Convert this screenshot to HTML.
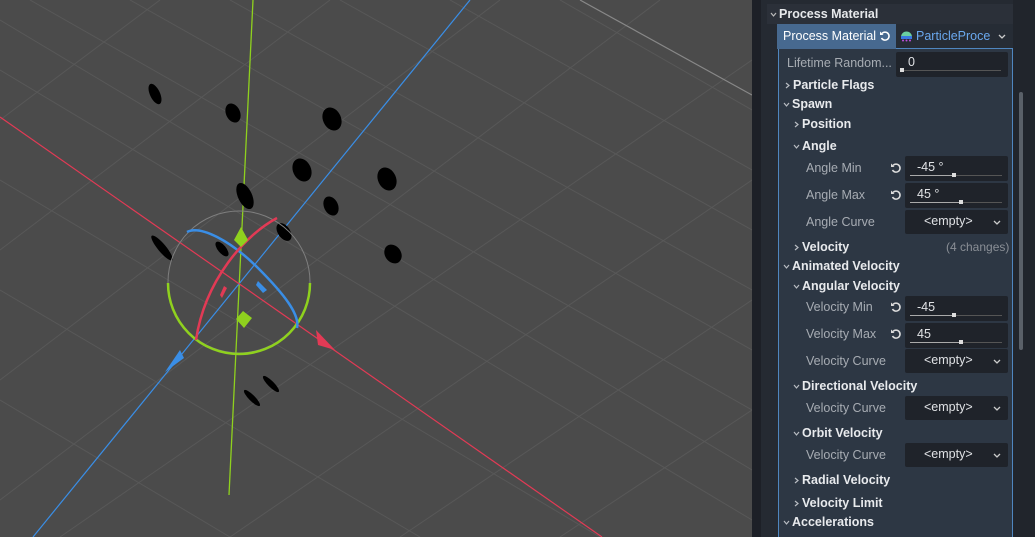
<!DOCTYPE html>
<html><head><meta charset="utf-8"><style>
*{margin:0;padding:0;box-sizing:border-box}
html,body{width:1035px;height:537px;overflow:hidden}
body{background:#4b4b4b;font-family:"Liberation Sans","DejaVu Sans",sans-serif;position:relative}
#vp{position:absolute;left:0;top:0;width:752px;height:537px;background:#4b4b4b}
#panel{position:absolute;left:752px;top:0;width:283px;height:537px;background:#252a32}
.a{position:absolute}
.hdr{position:absolute;left:767px;top:4px;width:246px;height:20px;background:#2b3039;color:#e6e8eb;font-weight:bold;font-size:12.5px;line-height:20px;padding-left:12px}
.sub{position:absolute;left:778px;top:48px;width:235px;height:489px;background:#2d3744;border:1px solid #4f86bf;border-bottom:none}
.t{position:absolute;font-size:12.5px;white-space:nowrap;line-height:16px}
.b{font-weight:bold;color:#e8eaed;padding-left:9px}
.l{color:#a7acb3}
.f{position:absolute;left:905px;width:103px;height:25px;background:#1f232a;border-radius:2px;color:#e0e2e5;font-size:12.5px}
.cd,.cr{position:absolute;left:0;top:5px;width:7px;height:7px}
</style></head><body>
<div id="vp">
<svg width="752" height="537" viewBox="0 0 752 537">
<g stroke="#585858" stroke-width="1" fill="none">
<line x1="0" y1="20" x2="752" y2="470"/><line x1="0" y1="70" x2="752" y2="520"/><line x1="30" y1="0" x2="752" y2="410"/><line x1="130" y1="0" x2="752" y2="350"/><line x1="230" y1="0" x2="752" y2="290"/><line x1="340" y1="0" x2="752" y2="230"/><line x1="450" y1="0" x2="752" y2="170"/><line x1="560" y1="0" x2="752" y2="110"/><line x1="0" y1="180" x2="600" y2="537"/><line x1="0" y1="290" x2="420" y2="537"/><line x1="0" y1="400" x2="230" y2="537"/>
<line x1="0" y1="120" x2="160" y2="0"/><line x1="0" y1="250" x2="330" y2="0"/><line x1="0" y1="380" x2="500" y2="0"/><line x1="0" y1="500" x2="660" y2="0"/><line x1="60" y1="537" x2="752" y2="60"/><line x1="230" y1="537" x2="752" y2="180"/><line x1="400" y1="537" x2="752" y2="300"/><line x1="560" y1="537" x2="752" y2="410"/>
</g>
<line x1="580" y1="0" x2="752" y2="95" stroke="#888" stroke-width="1.2"/>
<line x1="253" y1="0" x2="229" y2="495" stroke="#8fd11e" stroke-width="1.3"/>
<line x1="470" y1="0" x2="33" y2="537" stroke="#3a8ee6" stroke-width="1.2"/>
<line x1="0" y1="117" x2="602" y2="537" stroke="#e23a55" stroke-width="1.2"/>
<g fill="#000">
<ellipse cx="155" cy="94" rx="5" ry="11" transform="rotate(-25 155 94)"/>
<ellipse cx="233" cy="113" rx="7" ry="10" transform="rotate(-25 233 113)"/>
<ellipse cx="332" cy="119" rx="9" ry="12" transform="rotate(-25 332 119)"/>
<ellipse cx="302" cy="170" rx="9" ry="12" transform="rotate(-25 302 170)"/>
<ellipse cx="387" cy="179" rx="9" ry="12" transform="rotate(-25 387 179)"/>
<ellipse cx="245" cy="196" rx="7" ry="14" transform="rotate(-25 245 196)"/>
<ellipse cx="331" cy="206" rx="7" ry="10" transform="rotate(-25 331 206)"/>
<ellipse cx="393" cy="254" rx="8" ry="10" transform="rotate(-35 393 254)"/>
<ellipse cx="284" cy="232" rx="6" ry="10" transform="rotate(-35 284 232)"/>
<ellipse cx="162" cy="248" rx="4" ry="16" transform="rotate(-40 162 248)"/>
<ellipse cx="222" cy="249" rx="4" ry="9" transform="rotate(-40 222 249)"/>
<ellipse cx="271" cy="384" rx="3" ry="11" transform="rotate(-45 271 384)"/>
<ellipse cx="252" cy="398" rx="3" ry="11" transform="rotate(-45 252 398)"/>
</g>
<g fill="none" stroke-width="2.5">
<circle cx="239" cy="282" r="71" stroke="#7f7f7f" stroke-width="1"/>
<path d="M168 283 A71 71 0 0 0 310 283" stroke="#8fd11e"/>
<path d="M187 232 C200 225 230 240 258 268 C285 295 300 315 297 328" stroke="#3a8ee6"/>
<path d="M277 218 C245 235 205 280 196 340" stroke="#e23a55"/>
</g>
<path d="M241 227 L248 240 L241 247 L234 240 Z" fill="#8fd11e"/>
<path d="M243 311 L252 318 L244 328 L236 319 Z" fill="#8fd11e"/>
<path d="M258 281 L267 290 L263 293 L256 285 Z" fill="#3a8ee6"/>
<path d="M224 286 L227 288 L222 298 L220 295 Z" fill="#e23a55"/>
<path d="M316 330 L335 350 L318 345 Z" fill="#e23a55"/>
<path d="M180 350 L165 372 L184 358 Z" fill="#3a8ee6"/>
</svg>
</div>
<div id="panel"></div>
<div class="a" style="left:752px;top:0;width:9px;height:537px;background:#1d2027"></div>
<div class="a" style="left:1013px;top:0;width:22px;height:537px;background:#21252c"></div>
<div class="a" style="left:1019px;top:92px;width:4px;height:258px;background:#5a6068;border-radius:2px"></div>
<div class="hdr"><svg class="a" style="left:3px;top:7px" width="7" height="7"><path d="M1 2 L3.5 5 L6 2" stroke="#bbb" fill="none" stroke-width="1.2"/></svg>Process Material</div>
<div class="sub"></div>
<div class="a" style="left:777px;top:24px;width:119px;height:25px;background:#47698f;color:#fff;font-size:12.5px;line-height:24px;padding-left:6px">Process Material
<svg class="a" style="left:102px;top:6px" width="12" height="12"><path d="M3 3.5 A4 4 0 1 1 2.5 8" stroke="#fff" stroke-width="1.6" fill="none"/><path d="M1 1.5 L4.5 5 L1 5 Z" fill="#fff"/></svg></div>
<div class="a" style="left:896px;top:24px;width:117px;height:24px;background:#262c35;font-size:12.5px;line-height:24px;color:#6aa8ee;padding-left:20px">ParticleProce
<svg class="a" style="left:102px;top:9px" width="8" height="7"><path d="M1 2 L4 5 L7 2" stroke="#ccc" fill="none" stroke-width="1.3"/></svg>
<svg class="a" style="left:4px;top:6px" width="13" height="12"><path d="M1 7 A5.5 5.5 0 0 1 12 7 Z" fill="#6ad0a0"/><rect x="1" y="6" width="11" height="3" fill="#3a7ae0"/><circle cx="3" cy="10.5" r="1" fill="#c050e0"/><circle cx="6.5" cy="10.5" r="1" fill="#c050e0"/><circle cx="10" cy="10.5" r="1" fill="#c050e0"/></svg></div>

<div class="t l" style="left:787px;top:55px">Lifetime Random...</div>
<div class="f" style="left:896px;top:52px;width:112px"><span class="a" style="left:12px;top:3px">0</span><div class="a" style="left:5px;top:18px;width:100px;height:1px;background:#555"></div><div class="a" style="left:4px;top:16px;width:4px;height:4px;background:#ddd"></div></div>

<svg width="0" height="0" style="position:absolute"><defs>
<path id="R" d="M2 1 L5 3.5 L2 6" stroke="#b8bcc2" fill="none" stroke-width="1.2"/>
<path id="D" d="M1 2 L3.5 5 L6 2" stroke="#b8bcc2" fill="none" stroke-width="1.2"/></defs></svg>

<div class="t b" style="left:784px;top:77px"><svg class="cr"><use href="#R"/></svg>Particle Flags</div>
<div class="t b" style="left:783px;top:96px"><svg class="cd"><use href="#D"/></svg>Spawn</div>
<div class="t b" style="left:793px;top:116px"><svg class="cr"><use href="#R"/></svg>Position</div>
<div class="t b" style="left:793px;top:138px"><svg class="cd"><use href="#D"/></svg>Angle</div>

<svg width="0" height="0" style="position:absolute"><defs><g id="U"><path d="M3 3.5 A4 4 0 1 1 2.5 8" stroke="#ddd" stroke-width="1.6" fill="none"/><path d="M1 1.5 L4.5 5 L1 5 Z" fill="#ddd"/></g>
<path id="C" d="M1 2 L4 5 L7 2" stroke="#ccc" fill="none" stroke-width="1.3"/></defs></svg>

<div class="t l" style="left:806px;top:160px">Angle Min</div><svg class="a" style="left:890px;top:162px" width="12" height="12"><use href="#U"/></svg>
<div class="f" style="top:156px"><span class="a" style="left:12px;top:4px">-45 °</span><div class="a" style="left:5px;top:19px;width:92px;height:1px;background:#555"></div><div class="a" style="left:5px;top:19px;width:44px;height:1px;background:#aaa"></div><div class="a" style="left:47px;top:17px;width:4px;height:4px;background:#ddd"></div></div>
<div class="t l" style="left:806px;top:187px">Angle Max</div><svg class="a" style="left:890px;top:189px" width="12" height="12"><use href="#U"/></svg>
<div class="f" style="top:183px"><span class="a" style="left:12px;top:4px">45 °</span><div class="a" style="left:5px;top:19px;width:92px;height:1px;background:#555"></div><div class="a" style="left:5px;top:19px;width:51px;height:1px;background:#aaa"></div><div class="a" style="left:54px;top:17px;width:4px;height:4px;background:#ddd"></div></div>
<div class="t l" style="left:806px;top:214px">Angle Curve</div>
<div class="f" style="top:210px;height:24px"><span class="a" style="left:19px;top:4px">&lt;empty&gt;</span><svg class="a" style="left:88px;top:9px" width="8" height="7"><use href="#C"/></svg></div>

<div class="t b" style="left:793px;top:239px"><svg class="cr"><use href="#R"/></svg>Velocity</div>
<div class="t l" style="left:946px;top:239px;color:#8a8f96;font-size:12px">(4 changes)</div>
<div class="t b" style="left:783px;top:258px"><svg class="cd"><use href="#D"/></svg>Animated Velocity</div>
<div class="t b" style="left:793px;top:278px"><svg class="cd"><use href="#D"/></svg>Angular Velocity</div>

<div class="t l" style="left:806px;top:299px">Velocity Min</div><svg class="a" style="left:890px;top:301px" width="12" height="12"><use href="#U"/></svg>
<div class="f" style="top:296px"><span class="a" style="left:12px;top:4px">-45</span><div class="a" style="left:5px;top:19px;width:92px;height:1px;background:#555"></div><div class="a" style="left:5px;top:19px;width:44px;height:1px;background:#aaa"></div><div class="a" style="left:47px;top:17px;width:4px;height:4px;background:#ddd"></div></div>
<div class="t l" style="left:806px;top:326px">Velocity Max</div><svg class="a" style="left:890px;top:328px" width="12" height="12"><use href="#U"/></svg>
<div class="f" style="top:323px"><span class="a" style="left:12px;top:4px">45</span><div class="a" style="left:5px;top:19px;width:92px;height:1px;background:#555"></div><div class="a" style="left:5px;top:19px;width:51px;height:1px;background:#aaa"></div><div class="a" style="left:54px;top:17px;width:4px;height:4px;background:#ddd"></div></div>
<div class="t l" style="left:806px;top:353px">Velocity Curve</div>
<div class="f" style="top:349px;height:24px"><span class="a" style="left:19px;top:4px">&lt;empty&gt;</span><svg class="a" style="left:88px;top:9px" width="8" height="7"><use href="#C"/></svg></div>

<div class="t b" style="left:793px;top:378px"><svg class="cd"><use href="#D"/></svg>Directional Velocity</div>
<div class="t l" style="left:806px;top:400px">Velocity Curve</div>
<div class="f" style="top:396px;height:24px"><span class="a" style="left:19px;top:4px">&lt;empty&gt;</span><svg class="a" style="left:88px;top:9px" width="8" height="7"><use href="#C"/></svg></div>
<div class="t b" style="left:793px;top:425px"><svg class="cd"><use href="#D"/></svg>Orbit Velocity</div>
<div class="t l" style="left:806px;top:447px">Velocity Curve</div>
<div class="f" style="top:443px;height:24px"><span class="a" style="left:19px;top:4px">&lt;empty&gt;</span><svg class="a" style="left:88px;top:9px" width="8" height="7"><use href="#C"/></svg></div>
<div class="t b" style="left:793px;top:472px"><svg class="cr"><use href="#R"/></svg>Radial Velocity</div>
<div class="t b" style="left:793px;top:495px"><svg class="cr"><use href="#R"/></svg>Velocity Limit</div>
<div class="t b" style="left:783px;top:514px"><svg class="cd"><use href="#D"/></svg>Accelerations</div>
</body></html>
